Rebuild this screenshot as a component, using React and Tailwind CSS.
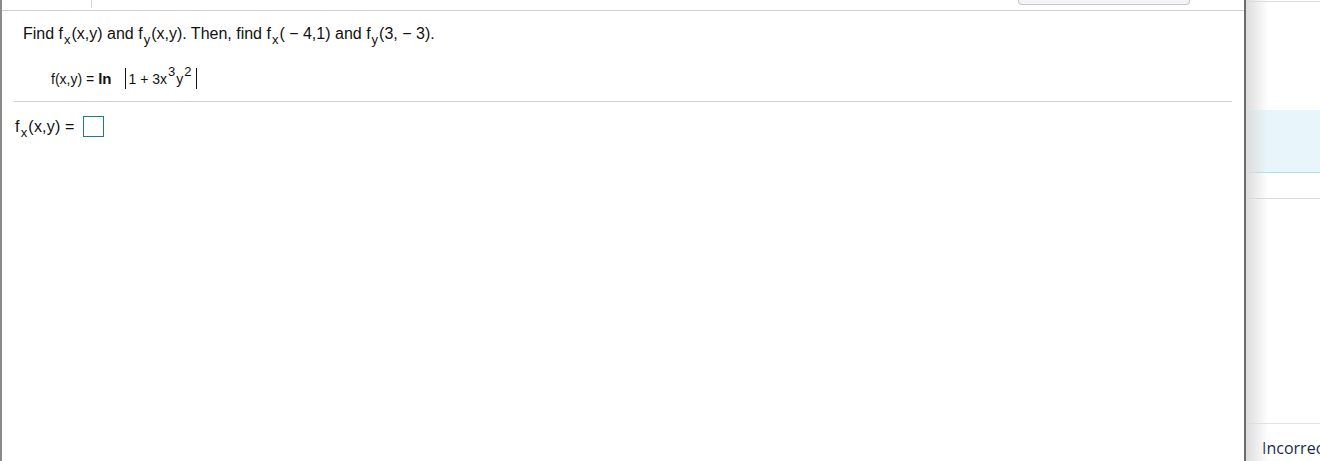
import React from 'react';

const Sub = ({ children }) => (
  <span className="relative top-[5px] mx-[1px] text-[13px] leading-none">{children}</span>
);

const Sup = ({ children }) => (
  <span className="relative top-[-7px] mx-[1px] text-[13px] leading-none">{children}</span>
);

const App = () => {
  return (
    <div className="flex h-[461px] w-[1320px] overflow-hidden bg-white" style={{ fontFamily: '"Liberation Sans", Arial, sans-serif' }}>
      {/* left edge */}
      <div className="w-[2px] shrink-0 bg-[#8a8a8a]" />

      {/* question panel */}
      <div className="flex w-[1242px] shrink-0 flex-col">
        <div className="flex h-[11px] border-b border-[#cdd1dc]">
          <div className="w-[89px]" />
          <div className="h-[8px] w-px bg-[#d6d6d6]" />
          <div className="w-[926px]" />
          <div className="h-[5px] w-[172px] rounded-b-[4px] border border-t-0 border-[#c9c9c9] bg-[#f4f4f4]" />
        </div>

        <div className="pl-[21px] pt-[13px] text-[16px] leading-[20px] text-[#111]">
          Find f<Sub>x</Sub>(x,y) and f<Sub>y</Sub>(x,y). Then, find f<Sub>x</Sub>( − 4,1) and f<Sub>y</Sub>(3, − 3).
        </div>

        <div className="flex items-center pl-[49px] pt-[24px] text-[14px] leading-[18px] text-[#111]">
          <span>f(x,y) = </span>
          <span className="ml-[4px] text-[15px] font-bold">ln</span>
          <span className="ml-[13px] flex items-center">
            <span className="mr-[3px] h-[21px] w-px bg-[#111]" />
            <span>1 + 3x</span>
            <Sup>3</Sup>
            <span>y</span>
            <Sup>2</Sup>
            <span className="ml-[3px] h-[21px] w-px bg-[#111]" />
          </span>
        </div>

        <div className="ml-[12px] mr-[12px] mt-[12px] h-px bg-[#cdd1dc]" />

        <div className="flex items-center pl-[13px] pt-[14px] text-[16px] leading-[20px] text-[#111]">
          <span className="tracking-[0.2px]">
            f<Sub>x</Sub>(x,y) =
          </span>
          <span className="ml-[8px] h-[21px] w-[21px] border border-[#1b7a94]" />
        </div>
      </div>

      {/* right panel */}
      <div className="relative flex min-w-0 flex-1 flex-col overflow-hidden border-l-2 border-[#6b6b6b]">
        <div className="pointer-events-none absolute inset-y-0 left-0 w-[22px] bg-gradient-to-r from-[#dcdcdc] to-transparent" />
        <div className="mt-px h-px bg-[#dcdcdc]" />
        <div className="h-[108px]" />
        <div className="h-[63px] border-b border-[#aedfe8] bg-[#e8f6fb]" />
        <div className="h-[25px]" />
        <div className="h-px bg-[#dadada]" />
        <div className="h-[224px]" />
        <div className="h-px bg-[#e2e2e2]" />
        <div className="whitespace-nowrap pl-[16px] pt-[12px] text-[16px] text-[#1c2b4a]" style={{ fontFamily: '"Open Sans", sans-serif' }}>
          Incorrect
        </div>
      </div>
    </div>
  );
};

export default App;
